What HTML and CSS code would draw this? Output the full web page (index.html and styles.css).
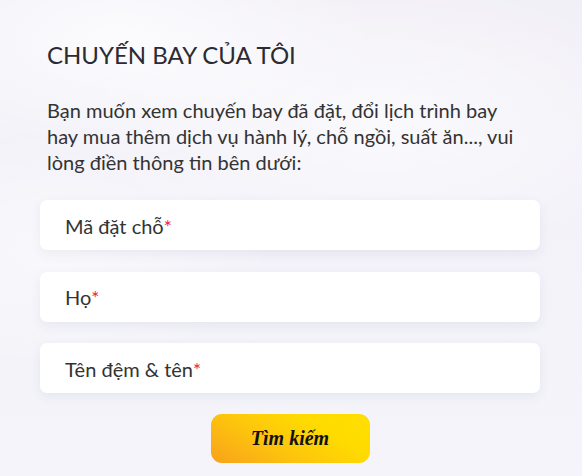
FILE: index.html
```html
<!DOCTYPE html>
<html lang="vi"><head><meta charset="utf-8"><title>Chuyến bay của tôi</title><link rel="stylesheet" href="styles.css"></head>
<body>
<main class="page">
  <h1 class="title">CHUYẾN BAY CỦA TÔI</h1>
  <p class="intro">Bạn muốn xem chuyến bay đã đặt, đổi lịch trình bay hay mua thêm dịch vụ hành lý, chỗ ngồi, suất ăn..., vui lòng điền thông tin bên dưới:</p>
  <form class="form">
    <div class="field"><span class="label">Mã đặt chỗ<span class="req">*</span></span></div>
    <div class="field"><span class="label">Họ<span class="req">*</span></span></div>
    <div class="field"><span class="label">Tên đệm &amp; tên<span class="req">*</span></span></div>
    <div class="actions"><button type="button" class="btn">Tìm kiếm</button></div>
  </form>
</main>
</body></html>
```
FILE: styles.css
```css
html,body{height:100%}
body{
  margin:0;
  font-family:Lato,"Noto Sans",sans-serif;
  color:#333;
  background:
    radial-gradient(ellipse 260px 120px at 120px 40px, rgba(255,255,255,.75), rgba(255,255,255,0)),
    radial-gradient(ellipse 300px 140px at 380px 120px, rgba(255,255,255,.6), rgba(255,255,255,0)),
    radial-gradient(ellipse 220px 120px at 60px 250px, rgba(255,255,255,.5), rgba(255,255,255,0)),
    linear-gradient(180deg,#f2f0f7 0%,#f3f2f9 40%,#f4f4fa 100%);
  overflow:hidden;
}
.page{
  width:500px;
  padding:40px 42px 0 40px;
}
.title{
  margin:0 0 0 7px;
  font-size:24px;
  line-height:30px;
  font-weight:400;
  color:#2b2b33;
}
.intro{
  margin:27px 0 0 7px;
  width:475px;
  font-size:20px;
  line-height:26px;
  color:#333;
}
.form{
  margin-top:25px;
  display:flex;
  flex-direction:column;
  gap:21.5px;
}
.field{
  height:50px;
  background:#fff;
  border-radius:7px;
  box-shadow:0 4px 12px rgba(60,50,110,.07);
  display:flex;
  align-items:center;
  padding:1px 0 0 25px;
  box-sizing:border-box;
}
.label{
  font-size:20px;
  color:#333;
}
.req{
  color:#ee2233;
  font-size:19px;
}
.actions{
  display:flex;
  justify-content:center;
  margin-top:-0.5px;
}
.btn{
  width:159px;
  height:49px;
  border:0;
  border-radius:11px;
  background:linear-gradient(30deg,#f8a11c 0%,#fdc60c 40%,#ffdb00 70%,#ffdf00 100%);
  font-family:"Liberation Serif",serif;
  font-weight:bold;
  font-style:italic;
  font-size:20px;
  color:#111;
  padding:0;
  cursor:pointer;
}
```
